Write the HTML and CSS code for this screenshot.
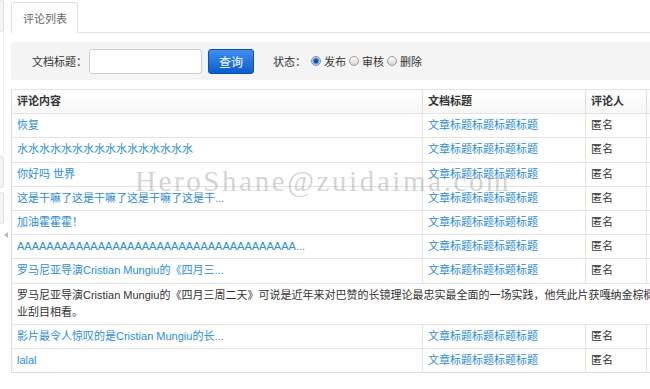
FILE: index.html
```html
<!DOCTYPE html>
<html lang="zh-CN">
<head>
<meta charset="utf-8">
<title>评论列表</title>
<link rel="stylesheet" href="styles.css">
</head>
<body>
<div class="page">
  <aside class="gutter">
    <div class="g-box g-top"></div>
    <div class="g-line"></div>
    <div class="g-box g-b1"></div>
    <div class="g-box g-b2"></div>
    <div class="g-arrow"></div>
  </aside>
  <main class="main">
    <div class="tabs"><div class="tab">评论列表</div></div>
    <form class="search">
      <label class="lbl">文档标题：</label>
      <input class="txt" type="text">
      <button class="btn" type="button">查询</button>
      <span class="lbl status">状态：</span>
      <label class="opt"><input type="radio" name="st" checked><span>发布</span></label>
      <label class="opt"><input type="radio" name="st"><span>审核</span></label>
      <label class="opt"><input type="radio" name="st"><span>删除</span></label>
    </form>
    <table class="grid">
      <colgroup><col class="c1"><col class="c2"><col class="c3"><col class="c4"></colgroup>
      <thead>
        <tr><th>评论内容</th><th>文档标题</th><th>评论人</th><th></th></tr>
      </thead>
      <tbody>
        <tr><td><a href="#">恢复</a></td><td><a href="#">文章标题标题标题标题</a></td><td>匿名</td><td></td></tr>
        <tr><td><a href="#">水水水水水水水水水水水水水水水水</a></td><td><a href="#">文章标题标题标题标题</a></td><td>匿名</td><td></td></tr>
        <tr><td><a href="#">你好吗 世界</a></td><td><a href="#">文章标题标题标题标题</a></td><td>匿名</td><td></td></tr>
        <tr><td><a href="#">这是干嘛了这是干嘛了这是干嘛了这是干...</a></td><td><a href="#">文章标题标题标题标题</a></td><td>匿名</td><td></td></tr>
        <tr><td><a href="#">加油霍霍霍！</a></td><td><a href="#">文章标题标题标题标题</a></td><td>匿名</td><td></td></tr>
        <tr><td><a href="#">AAAAAAAAAAAAAAAAAAAAAAAAAAAAAAAAAAAAAA...</a></td><td><a href="#">文章标题标题标题标题</a></td><td>匿名</td><td></td></tr>
        <tr><td><a href="#">罗马尼亚导演Cristian Mungiu的《四月三...</a></td><td><a href="#">文章标题标题标题标题</a></td><td>匿名</td><td></td></tr>
        <tr class="detail"><td colspan="4">罗马尼亚导演Cristian Mungiu的《四月三周二天》可说是近年来对巴赞的长镜理论最忠实最全面的一场实践，他凭此片获嘎纳金棕榈大奖，令世人对罗马尼亚电影业刮目相看。</td></tr>
        <tr><td><a href="#">影片最令人惊叹的是Cristian Mungiu的长...</a></td><td><a href="#">文章标题标题标题标题</a></td><td>匿名</td><td></td></tr>
        <tr><td><a href="#">lalal</a></td><td><a href="#">文章标题标题标题标题</a></td><td>匿名</td><td></td></tr>
      </tbody>
    </table>
  </main>
  <div class="watermark">HeroShane@zuidaima.com</div>
</div>
</body>
</html>
```
FILE: styles.css
```css
html, body {
  margin: 0;
  padding: 0;
  background: #fff;
}
body {
  width: 650px;
  height: 389px;
  overflow: hidden;
  font-family: "Liberation Sans", Arial, "Noto Sans CJK SC", sans-serif;
  font-size: 11px;
  color: #333;
}
.page {
  position: relative;
  display: flex;
  width: 650px;
  height: 389px;
}
.gutter {
  flex: 0 0 11px;
  display: flex;
  flex-direction: column;
  align-items: flex-start;
}
.g-box {
  width: 3px;
  background: #f4f4f4;
  border: 1px solid #e2e2e2;
  border-left: none;
  border-radius: 0 3px 3px 0;
}
.g-top { height: 30px; }
.g-line {
  width: 3px;
  height: 122px;
  border-right: 1px solid #ececec;
}
.g-b1 { height: 30px; margin-top: 2px; }
.g-b2 { height: 30px; margin-top: 4px; }
.g-arrow {
  margin-top: 8px;
  margin-left: 4px;
  width: 0;
  height: 0;
  border-top: 3px solid transparent;
  border-bottom: 3px solid transparent;
  border-right: 4px solid #bbb;
}
.main {
  flex: 1 0 auto;
  min-width: 0;
}
.tabs {
  padding-top: 2px;
  height: 30px;
  border-bottom: 1px solid #e6e6e6;
  display: flex;
}
.tab {
  box-sizing: border-box;
  padding: 0 10px 0 11px;
  border: 1px solid #dedede;
  border-bottom: none;
  border-radius: 3px 3px 0 0;
  background: #fff;
  color: #666;
  display: flex;
  align-items: center;
  margin-bottom: -1px;
  height: 31px;
}
.search {
  margin: 9px 0 0 0;
  height: 38px;
  background: #f4f4f4;
  border-radius: 3px;
  display: flex;
  align-items: center;
  padding-left: 21px;
}
.lbl { color: #333; }
.txt {
  margin: 0 0 0 2px;
  width: 113px;
  height: 25px;
  box-sizing: border-box;
  border: 1px solid #cfcfcf;
  border-radius: 3px;
  background: #fff;
  padding: 0 4px;
}
.btn {
  margin-left: 6px;
  width: 46px;
  height: 25px;
  border: 1px solid #0b4fb8;
  border-radius: 3px;
  background: linear-gradient(#3f90ec, #0c5bd0);
  color: #fff;
  font-family: "Liberation Sans", Arial, "Noto Sans CJK SC", sans-serif;
  font-size: 12px;
  padding: 0;
}
.status { margin-left: 19px; margin-right: 5px; }
.opt {
  display: flex;
  align-items: center;
  margin-right: 3px;
}
.opt input {
  appearance: none;
  -webkit-appearance: none;
  margin: 0 3px 0 0;
  width: 10px;
  height: 10px;
  border: 1px solid #9a9a9a;
  border-radius: 50%;
  background: linear-gradient(#fdfdfd, #d6d6d6);
}
.opt input:checked {
  background: radial-gradient(circle, #0d3f86 0, #1f63b8 2px, #6ea3dd 3px, #e8eef6 4px);
  border-color: #6f8fb5;
}
.grid {
  margin-top: 9px;
  width: 801px;
  border-collapse: collapse;
  table-layout: fixed;
  border: 1px solid #dcdcdc;
}
.c1 { width: 411px; }
.c2 { width: 163px; }
.c3 { width: 61px; }
.c4 { width: 166px; }
.grid th, .grid td {
  padding: 3px 5px;
  line-height: 17.2px;
  text-align: left;
  border-top: 1px solid #e3e3e3;
  border-left: 1px solid #e3e3e3;
  vertical-align: middle;
  white-space: nowrap;
  overflow: hidden;
}
.grid th {
  font-weight: bold;
  color: #333;
  background: linear-gradient(#ffffff, #f7f7f7);
  border-left-color: #dcdcdc;
}
.grid td:first-child, .grid th:first-child { border-left: none; }
.grid a {
  color: #2b8dd6;
  text-decoration: none;
}
.grid .detail td {
  white-space: normal;
  color: #333;
}
.watermark {
  position: absolute;
  left: 135px;
  top: 165px;
  font-family: "Liberation Serif", "Times New Roman", serif;
  font-size: 29px;
  letter-spacing: 2.6px;
  line-height: 32px;
  color: rgba(150, 150, 150, 0.42);
  pointer-events: none;
  white-space: nowrap;
}
```
